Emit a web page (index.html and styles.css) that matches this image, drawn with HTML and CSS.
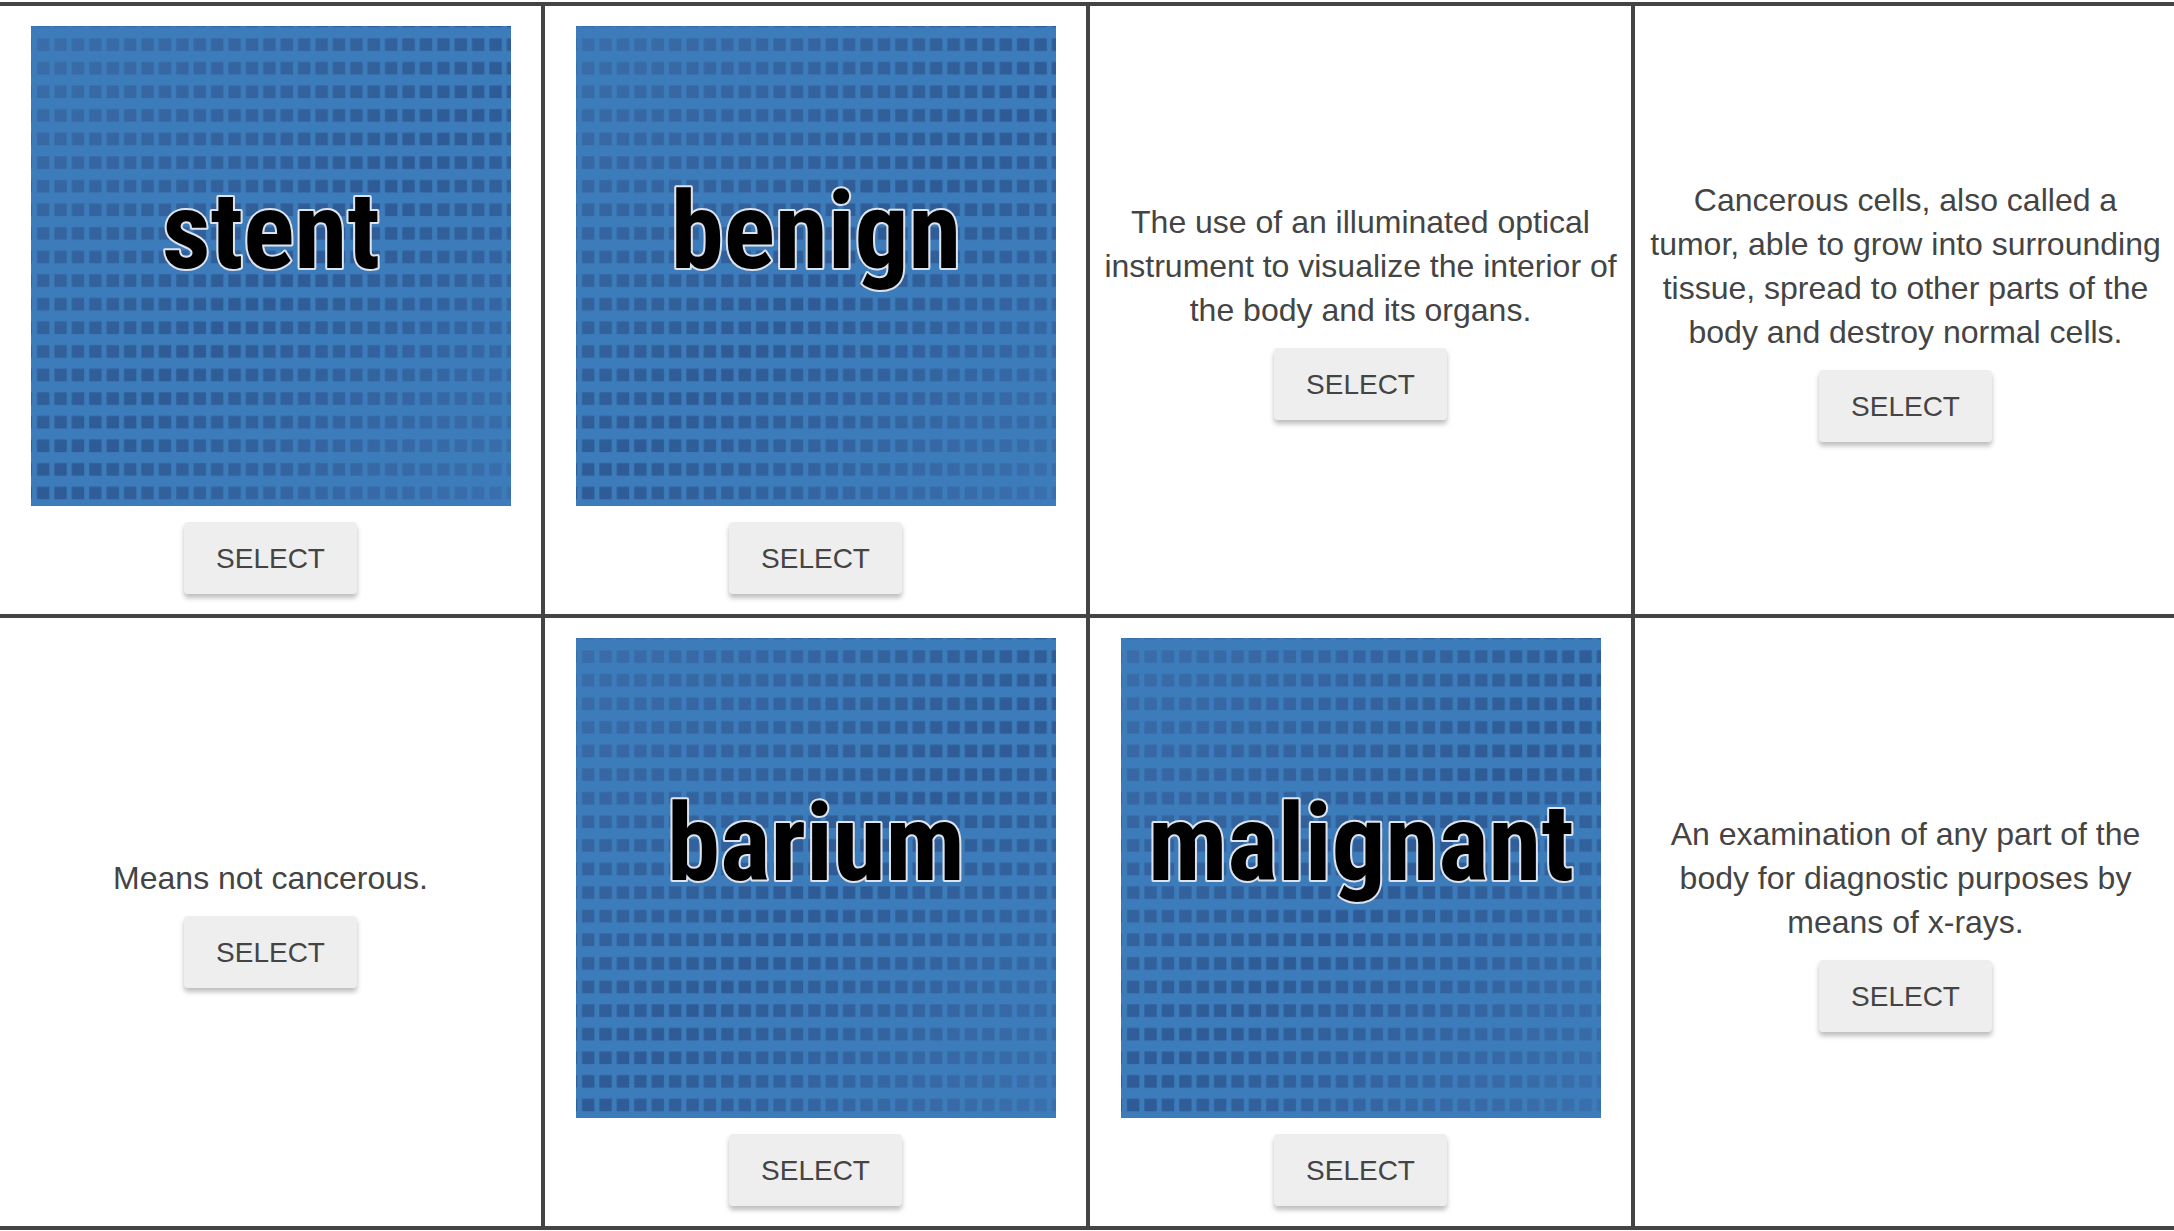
FILE: index.html
```html
<!DOCTYPE html>
<html lang="en">
  <head>
    <meta charset="utf-8" />
    <title>Matching</title>
    <link rel="stylesheet" href="styles.css">
  </head>

  <body>
    <!-- Shared card background -->
    <svg class="defs" width="0" height="0" aria-hidden="true">
      <defs>
        <pattern id="squares" x="5.7" y="12" width="17.4" height="23.6" patternUnits="userSpaceOnUse">
          <rect x="0.3" y="0.3" width="12.4" height="12.6" fill="#fff" />
        </pattern>
        <mask id="squareMask" maskUnits="userSpaceOnUse" x="0" y="0" width="480" height="480">
          <rect width="480" height="480" fill="url(#squares)" />
        </mask>
        <linearGradient id="band" gradientUnits="userSpaceOnUse" x1="20" y1="0" x2="460" y2="500">
          <stop offset="0" stop-color="#3a6da9" />
          <stop offset="0.52" stop-color="#2e5b95" />
          <stop offset="1" stop-color="#3a70ae" />
        </linearGradient>
        <g id="tile">
          <rect width="480" height="480" fill="#3d7cbb" />
          <rect width="480" height="480" fill="url(#band)" mask="url(#squareMask)" />
        </g>
      </defs>
    </svg>

    <main class="board">
      <div class="card">
        <svg class="word" viewBox="0 0 480 480">
          <use href="#tile" />
          <text x="240" y="242">stent</text>
        </svg>
        <button class="select" type="button">SELECT</button>
      </div>

      <div class="card">
        <svg class="word" viewBox="0 0 480 480">
          <use href="#tile" />
          <text x="240" y="242">benign</text>
        </svg>
        <button class="select" type="button">SELECT</button>
      </div>

      <div class="card">
        <p class="meaning">The use of an illuminated optical instrument to visualize the interior of the body and its organs.</p>
        <button class="select" type="button">SELECT</button>
      </div>

      <div class="card">
        <p class="meaning">Cancerous cells, also called a tumor, able to grow into surrounding tissue, spread to other parts of the body and destroy normal cells.</p>
        <button class="select" type="button">SELECT</button>
      </div>

      <div class="card">
        <p class="meaning">Means not cancerous.</p>
        <button class="select" type="button">SELECT</button>
      </div>

      <div class="card">
        <svg class="word" viewBox="0 0 480 480">
          <use href="#tile" />
          <text x="240" y="242">barium</text>
        </svg>
        <button class="select" type="button">SELECT</button>
      </div>

      <div class="card">
        <svg class="word" viewBox="0 0 480 480">
          <use href="#tile" />
          <text x="240" y="242">malignant</text>
        </svg>
        <button class="select" type="button">SELECT</button>
      </div>

      <div class="card">
        <p class="meaning">An examination of any part of the body for diagnostic purposes by means of x-rays.</p>
        <button class="select" type="button">SELECT</button>
      </div>
    </main>
  </body>
</html>
```
FILE: styles.css
```css
body {
  margin: 0;
  padding-top: 2px;
  background-color: #fff;
  color: #444;
  font-family: "Liberation Sans", Arial, sans-serif;
  overflow-x: hidden;
}

.defs {
  display: block;
}

/* the outer side lines sit just past the window edges */
.board {
  display: grid;
  grid-template-columns: repeat(4, minmax(0, 1fr));
  margin: 0 -2px 0 -4px;
  border-bottom: 4px solid #444;
}

.card {
  display: flex;
  flex-direction: column;
  align-items: center;
  justify-content: center;
  gap: 16px;
  padding: 20px 12px;
  border-top: 4px solid #444;
  border-left: 4px solid #444;
}

.word {
  display: block;
  width: 480px;
  max-width: 100%;
}

.word text {
  font-family: "Roboto Condensed", "Arial Narrow", Roboto, sans-serif;
  font-size: 107px;
  font-weight: bold;
  text-anchor: middle;
  fill: #000;
  stroke: #dfe3ec;
  stroke-width: 4px;
  stroke-linejoin: round;
  paint-order: stroke;
}

.meaning {
  margin: 0;
  font-size: 32px;
  line-height: 44px;
  text-align: center;
}

.select {
  height: 72px;
  padding: 2px 32px 0;
  border: none;
  border-radius: 4px;
  background-color: #eee;
  color: #444;
  font-family: inherit;
  font-size: 28px;
  box-shadow: 0 4px 5px rgba(0, 0, 0, 0.26);
  cursor: pointer;
}

.select:hover {
  background-color: #e4e4e4;
}
```
